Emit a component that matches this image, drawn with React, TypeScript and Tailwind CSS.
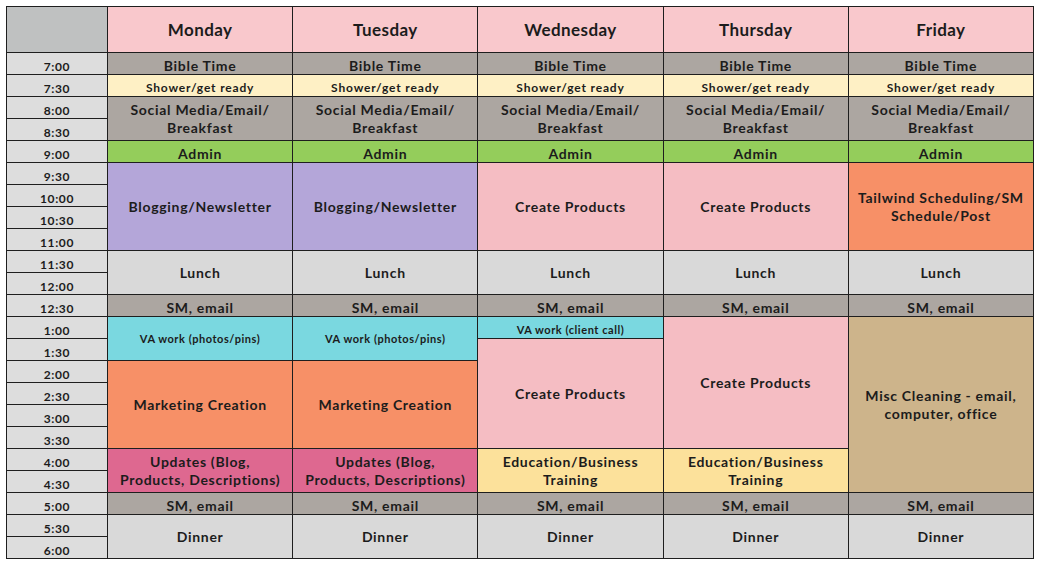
import type { ReactNode } from "react";

type Cell = {
  text: ReactNode;
  bg: string;
  span?: string;
  size?: string;
};

const times = [
  "7:00", "7:30", "8:00", "8:30", "9:00", "9:30", "10:00", "10:30", "11:00",
  "11:30", "12:00", "12:30", "1:00", "1:30", "2:00", "2:30", "3:00", "3:30",
  "4:00", "4:30", "5:00", "5:30", "6:00",
];

const days = ["Monday", "Tuesday", "Wednesday", "Thursday", "Friday"];

const GRAY = "bg-[#aca6a1]";
const LIGHT = "bg-[#d9d9d9]";

const five = (c: Cell): Cell[] => [c, c, c, c, c];

// cells listed row by row, keyed by the time row where they start
const rows: Record<number, Cell[]> = {
  0: five({ text: "Bible Time", bg: GRAY }),
  1: five({ text: "Shower/get ready", bg: "bg-[#fef0c5]", size: "text-[12px] tracking-[0.07em]" }),
  2: five({
    text: (
      <>
        Social Media/Email/
        <br />
        Breakfast
      </>
    ),
    bg: GRAY,
    span: "row-span-2",
  }),
  4: five({ text: "Admin", bg: "bg-[#94cd5b]" }),
  5: [
    { text: "Blogging/Newsletter", bg: "bg-[#b4a6d9]", span: "row-span-4" },
    { text: "Blogging/Newsletter", bg: "bg-[#b4a6d9]", span: "row-span-4" },
    { text: "Create Products", bg: "bg-[#f5bdc3]", span: "row-span-4" },
    { text: "Create Products", bg: "bg-[#f5bdc3]", span: "row-span-4" },
    {
      text: (
        <>
          Tailwind Scheduling/SM
          <br />
          Schedule/Post
        </>
      ),
      bg: "bg-[#f79067]",
      span: "row-span-4",
    },
  ],
  9: five({ text: "Lunch", bg: LIGHT, span: "row-span-2" }),
  11: five({ text: "SM, email", bg: GRAY }),
  12: [
    { text: "VA work (photos/pins)", bg: "bg-[#7ad8e0]", span: "row-span-2", size: "text-[11px] tracking-[0.05em]" },
    { text: "VA work (photos/pins)", bg: "bg-[#7ad8e0]", span: "row-span-2", size: "text-[11px] tracking-[0.05em]" },
    { text: "VA work (client call)", bg: "bg-[#7ad8e0]", size: "text-[11px] tracking-[0.05em]" },
    { text: "Create Products", bg: "bg-[#f5bdc3]", span: "row-span-6" },
    {
      text: (
        <>
          Misc Cleaning - email,
          <br />
          computer, office
        </>
      ),
      bg: "bg-[#cdb48b]",
      span: "row-span-8",
    },
  ],
  13: [{ text: "Create Products", bg: "bg-[#f5bdc3]", span: "row-span-5" }],
  14: [
    { text: "Marketing Creation", bg: "bg-[#f79067]", span: "row-span-4" },
    { text: "Marketing Creation", bg: "bg-[#f79067]", span: "row-span-4" },
  ],
  18: [
    {
      text: (
        <>
          Updates (Blog,
          <br />
          Products, Descriptions)
        </>
      ),
      bg: "bg-[#de6890]",
      span: "row-span-2",
    },
    {
      text: (
        <>
          Updates (Blog,
          <br />
          Products, Descriptions)
        </>
      ),
      bg: "bg-[#de6890]",
      span: "row-span-2",
    },
    {
      text: (
        <>
          Education/Business
          <br />
          Training
        </>
      ),
      bg: "bg-[#fce19b]",
      span: "row-span-2",
    },
    {
      text: (
        <>
          Education/Business
          <br />
          Training
        </>
      ),
      bg: "bg-[#fce19b]",
      span: "row-span-2",
    },
  ],
  20: five({ text: "SM, email", bg: GRAY }),
  21: five({ text: "Dinner", bg: LIGHT, span: "row-span-2" }),
};

export default function App() {
  return (
    <div className="min-h-[568px] w-[1041px] bg-white pt-[6px] pl-[6px] font-['Lato',sans-serif] text-[#1c1c1c]">
      <div className="grid w-[1028px] grid-cols-[100px_repeat(5,1fr)] grid-rows-[45px_repeat(23,21px)] gap-px bg-[#1e1e1e] p-px">
        <div className="bg-[#bfc1c1]" />
        {days.map((d) => (
          <div
            key={d}
            className="flex items-center justify-center bg-[#f9c8cc] text-[17px] font-bold tracking-wide"
          >
            {d}
          </div>
        ))}
        {times.map((t, i) => (
          <div key={t} className="contents">
            <div className="col-start-1 flex items-center justify-center bg-[#dddddd] pt-[6px] text-[12px] font-bold tracking-wider">
              {t}
            </div>
            {(rows[i] ?? []).map((c, j) => (
              <div
                key={j}
                className={`flex items-center justify-center text-center font-bold leading-[18px] ${c.span ? "pt-px" : "pt-[4px]"} ${c.bg} ${c.span ?? ""} ${c.size ?? "text-[14px] tracking-wider"}`}
              >
                <span>{c.text}</span>
              </div>
            ))}
          </div>
        ))}
      </div>
    </div>
  );
}
